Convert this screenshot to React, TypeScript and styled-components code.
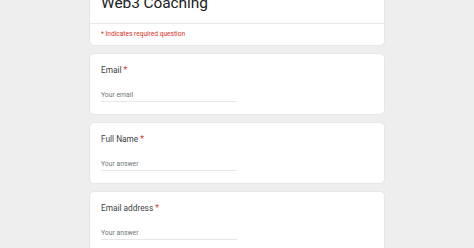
import styled, { createGlobalStyle } from 'styled-components';

const GlobalStyle = createGlobalStyle`
  html, body {
    margin: 0;
    padding: 0;
    background: #eeeeee;
    overflow: hidden;
  }
  * {
    box-sizing: border-box;
  }
`;

const Page = styled.div`
  width: 474px;
  height: 248px;
  overflow: hidden;
  display: flex;
  flex-direction: column;
  align-items: center;
  font-family: Roboto, "Open Sans", sans-serif;
`;

const Card = styled.div`
  width: 296px;
  flex-shrink: 0;
  background: #ffffff;
  border: 1px solid #e6e6e6;
  border-radius: 5px;
  margin-top: 7px;
`;

const HeaderCard = styled(Card)`
  margin-top: -16px;
`;

const TitleArea = styled.div`
  padding: 8px 11px 9px;
  border-bottom: 1px solid #e8e8e8;
`;

const Title = styled.h1`
  margin: 0;
  font-size: 15.5px;
  line-height: 21px;
  font-weight: 400;
  letter-spacing: -0.1px;
  color: #202124;
`;

const RequiredNote = styled.div`
  padding: 0 11px;
  height: 21px;
  line-height: 21px;
  font-size: 6.6px;
  color: #d93025;
`;

const QuestionCard = styled(Card)`
  height: 62px;
  padding: 10px 11px 0;
`;

const Label = styled.div`
  font-size: 8.3px;
  line-height: 12px;
  font-weight: 400;
  color: #3c4043;
`;

const Star = styled.span`
  color: #d93025;
`;

const Input = styled.div`
  margin-top: 13px;
  width: 136px;
  height: 13px;
  font-size: 6.8px;
  line-height: 12px;
  color: #70757a;
  border-bottom: 1px solid #e6e6e6;
`;

const questions = [
  { label: 'Email', placeholder: 'Your email' },
  { label: 'Full Name', placeholder: 'Your answer' },
  { label: 'Email address', placeholder: 'Your answer' },
];

export default function App() {
  return (
    <>
      <GlobalStyle />
      <Page>
        <HeaderCard>
          <TitleArea>
            <Title>Web3 Coaching</Title>
          </TitleArea>
          <RequiredNote>* Indicates required question</RequiredNote>
        </HeaderCard>
        {questions.map((q) => (
          <QuestionCard key={q.label}>
            <Label>
              {q.label} <Star>*</Star>
            </Label>
            <Input>{q.placeholder}</Input>
          </QuestionCard>
        ))}
      </Page>
    </>
  );
}
